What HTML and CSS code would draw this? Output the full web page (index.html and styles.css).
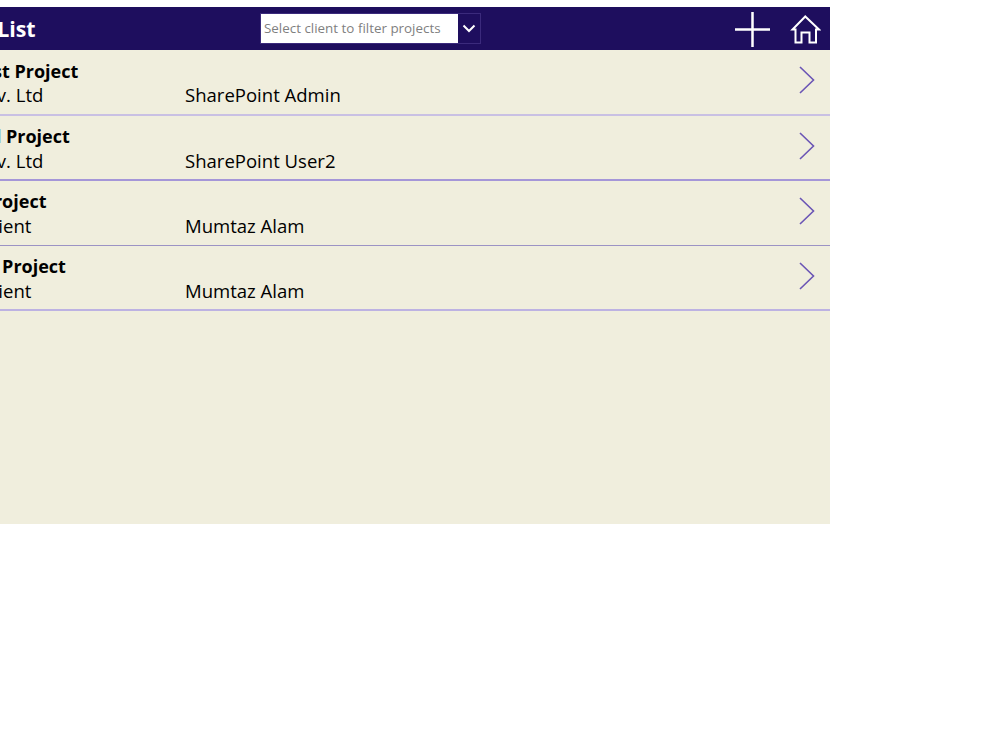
FILE: index.html
```html
<!DOCTYPE html>
<html lang="en">
<head>
<meta charset="utf-8">
<title>Project List</title>
<link rel="stylesheet" href="styles.css">
</head>
<body>
<div class="app">
  <header class="bar">
    <h1 class="title">Project List</h1>
    <div class="filter">
      <span class="filter-input">Select client to filter projects</span>
      <span class="filter-btn">
        <svg width="14" height="9" viewBox="0 0 14 9"><path d="M1.500 1.500 7 7l5.500-5.500" fill="none" stroke="#fff" stroke-width="2"/></svg>
      </span>
    </div>
    <div class="actions">
      <svg class="plus" width="35" height="35" viewBox="0 0 35 35"><path d="M0 17.500h35M17.500 0v35" stroke="#fff" stroke-width="2.500" fill="none"/></svg>
      <svg class="home" width="31" height="29" viewBox="0 0 31 29"><path d="M15.250 1.500 2.500 14.500H5.500V27.500H11.500V17.500H19.500V27.500H26V14.500H29 Z" fill="none" stroke="#fff" stroke-width="2"/></svg>
    </div>
  </header>
  <main class="list">
    <article class="row row-a">
      <div class="cells">
        <div class="name">Test Project</div>
        <div class="meta"><span class="client">s Pv. Ltd</span><span class="owner">SharePoint Admin</span></div>
      </div>
      <svg class="chev" width="16" height="28" viewBox="0 0 16 28"><path d="M1 1l13.500 13L1 27" fill="none" stroke="#6b55b5" stroke-width="1.600"/></svg>
    </article>
    <article class="row row-b">
      <div class="cells">
        <div class="name">Aid Project</div>
        <div class="meta"><span class="client">s Pv. Ltd</span><span class="owner">SharePoint User2</span></div>
      </div>
      <svg class="chev" width="16" height="28" viewBox="0 0 16 28"><path d="M1 1l13.500 13L1 27" fill="none" stroke="#6b55b5" stroke-width="1.600"/></svg>
    </article>
    <article class="row row-c">
      <div class="cells">
        <div class="name">I Project</div>
        <div class="meta"><span class="client">I Client</span><span class="owner">Mumtaz Alam</span></div>
      </div>
      <svg class="chev" width="16" height="28" viewBox="0 0 16 28"><path d="M1 1l13.500 13L1 27" fill="none" stroke="#6b55b5" stroke-width="1.600"/></svg>
    </article>
    <article class="row row-d">
      <div class="cells">
        <div class="name">Bit Project</div>
        <div class="meta"><span class="client">I Client</span><span class="owner">Mumtaz Alam</span></div>
      </div>
      <svg class="chev" width="16" height="28" viewBox="0 0 16 28"><path d="M1 1l13.500 13L1 27" fill="none" stroke="#6b55b5" stroke-width="1.600"/></svg>
    </article>
  </main>
</div>
</body>
</html>
```
FILE: styles.css
```css
html, body { margin: 0; padding: 0; background: #fff; }
body { height: 750px; overflow: hidden; font-family: "Open Sans", sans-serif; color: #000; }
.app { width: 830px; height: 517px; margin-top: 7px; background: #f0eedd; overflow: hidden; display: flex; flex-direction: column; }
.bar { height: 43px; flex: none; background: #1e0e5e; display: flex; align-items: center; }
.title { margin: 0 0 0 -84px; width: 344px; flex: none; font-size: 21.33px; font-weight: 700; color: #fff; white-space: nowrap; line-height: 43px; }
.filter { display: flex; height: 31px; width: 221px; box-sizing: border-box; border: 1px solid #3b2a7c; flex: none; }
.filter-input { width: 197px; background: #fff; color: #7f7f7f; font-size: 13.4px; line-height: 29px; padding-left: 3px; box-sizing: border-box; white-space: nowrap; overflow: hidden; }
.filter-btn { flex: 1; display: flex; align-items: center; justify-content: center; }
.actions { margin-left: auto; display: flex; align-items: center; gap: 20px; padding-right: 9px; }
.plus { margin-top: 1px; }
.home { margin-top: 1px; }
.list { flex: 1; padding-top: 1px; }
.row { height: 65px; box-sizing: border-box; display: flex; align-items: center; justify-content: space-between; padding-right: 15px; }
.row-a { border-bottom: 2px solid #c9c0e3; padding-bottom: 1px; }
.row-a .name { padding-top: 1px; margin-bottom: -1px; }
.row-b { border-bottom: 2px solid #a596d8; }
.row-c { border-bottom: 1px solid #9c93c4; }
.row-d { border-bottom: 2px solid #bdb2e2; }
.cells { margin-left: -28px; padding-top: 1px; }
.name { font-size: 18px; font-weight: 700; line-height: 24px; white-space: nowrap; }
.meta { display: flex; font-size: 18.55px; line-height: 25px; white-space: nowrap; }
.client { width: 213px; flex: none; }
.chev { margin-top: -4px; }
```
